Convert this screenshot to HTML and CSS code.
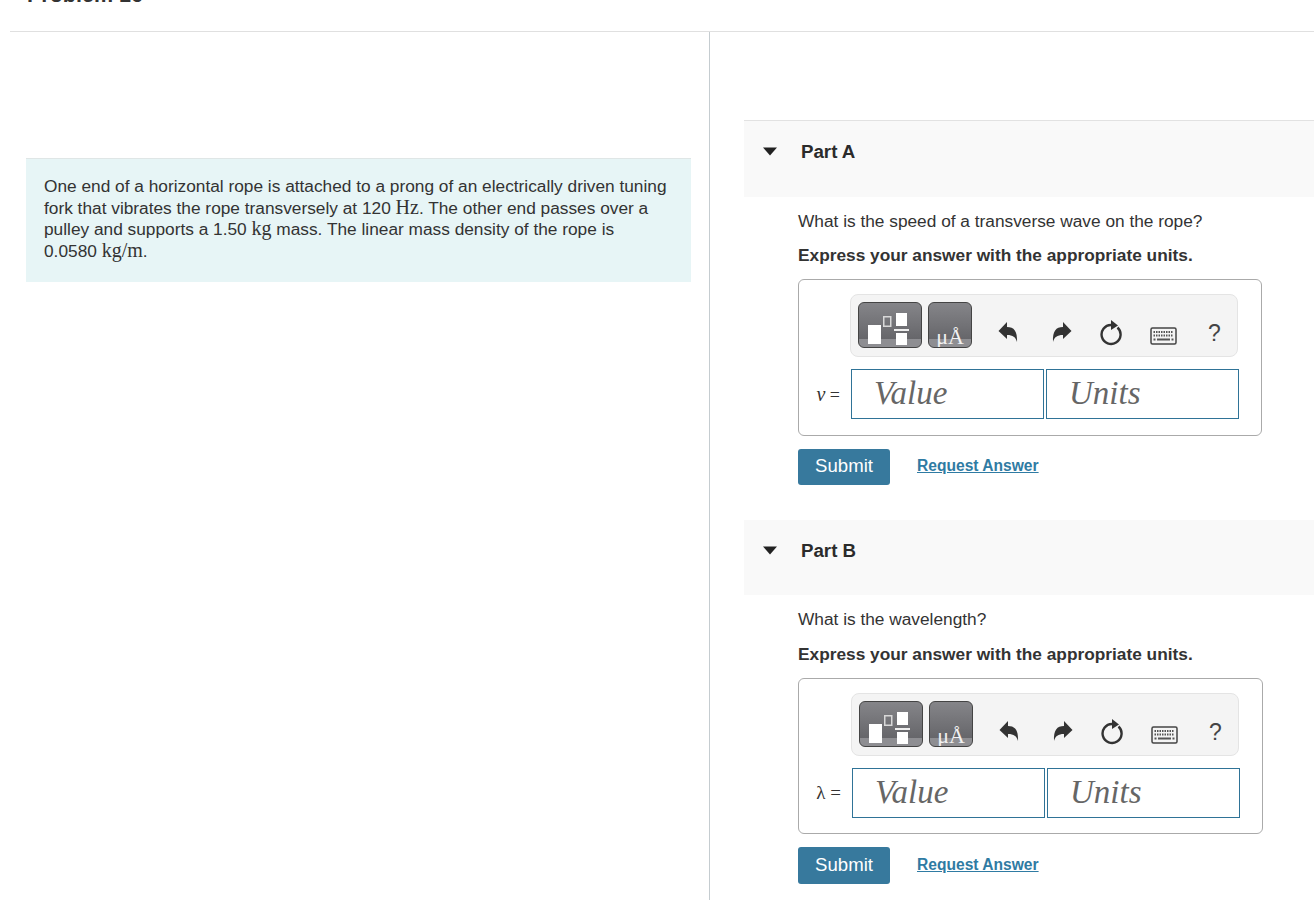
FILE: index.html
```html
<!DOCTYPE html>
<html lang="en">

<head>
    <meta charset="UTF-8">
    <title>Problem 16</title>
    <link rel="stylesheet" href="styles.css">
</head>

<body>
    <header class="top">
        <h1 class="title">Problem 16</h1>
    </header>

    <div class="columns">
        <div class="left">
            <div class="intro">
                <p>One end of a horizontal rope is attached to a prong of an electrically driven tuning
                    fork that vibrates the rope transversely at 120 <span class="math">Hz</span>. The other end passes over a
                    pulley and supports a 1.50 <span class="math">kg</span> mass. The linear mass density of the rope is
                    0.0580 <span class="math">kg/m</span>.</p>
            </div>
        </div>

        <div class="right">
            <!-- part A -->
            <section class="part">
                <div class="part-head part-head-first">
                    <svg class="caret" width="16" height="9" viewBox="0 0 16 9"><path d="M1 0.500H15L8 8.500Z" fill="#222" /></svg>
                    <h2>Part A</h2>
                </div>
                <div class="part-body">
                    <p class="question">What is the speed of a transverse wave on the rope?</p>
                    <p class="express">Express your answer with the appropriate units.</p>
                    <div class="answer">
                        <div class="toolbar">
                            <div class="tpl tpl-frac">
                                <svg width="64" height="46" viewBox="0 0 64 46">
                                    <rect x="10" y="23" width="13" height="19" fill="#fff" />
                                    <rect x="25.750" y="14.750" width="7" height="9.500" fill="none" stroke="#d8d8d8" stroke-width="1.500" />
                                    <rect x="38" y="11" width="11" height="13" fill="#fff" />
                                    <rect x="36" y="27" width="15" height="2" fill="#eee" />
                                    <rect x="38" y="31" width="11" height="12" fill="#fff" />
                                </svg>
                            </div>
                            <div class="tpl tpl-unit">μÅ</div>
                            <svg class="tool tool-undo" width="20" height="22" viewBox="0 0 20 22"><path d="M0.500 10L9 1V6C16 6 19.500 10 19 21C17.500 16 15 14 9 14V18Z" fill="#333" /></svg>
                            <svg class="tool tool-redo" width="20" height="22" viewBox="0 0 20 22"><path d="M19.500 10L11 1V6C4 6 0.500 10 1 21C2.500 16 5 14 11 14V18Z" fill="#333" /></svg>
                            <svg class="tool tool-reset" width="24" height="27" viewBox="0 0 24 27">
                                <path d="M17.500 8.500A9.500 9.500 0 1 1 11 6" fill="none" stroke="#333" stroke-width="2.400" />
                                <path d="M11 1L18 6.500L11 11Z" fill="#333" />
                            </svg>
                            <svg class="tool tool-keys" width="27" height="19" viewBox="0 0 27 19">
                                <rect x="1" y="2" width="25" height="16" rx="1.500" fill="#f4f4f4" stroke="#444" stroke-width="1.500" />
                                <path d="M3.500 6H23.500M3.500 9.500H23.500" stroke="#555" stroke-width="2" stroke-dasharray="1.500 1" />
                                <path d="M3.500 13.500H5.500M7 13.500H20M21.500 13.500H23.500" stroke="#555" stroke-width="1.800" />
                            </svg>
                            <span class="tool tool-help">?</span>
                        </div>
                        <div class="inputs">
                            <span class="var"><i>v</i> =</span>
                            <div class="field">Value</div>
                            <div class="field">Units</div>
                        </div>
                    </div>
                    <div class="actions">
                        <button class="submit">Submit</button>
                        <a class="request" href="#">Request Answer</a>
                    </div>
                </div>
            </section>

            <!-- part B -->
            <section class="part part-b">
                <div class="part-head">
                    <svg class="caret" width="16" height="9" viewBox="0 0 16 9"><path d="M1 0.500H15L8 8.500Z" fill="#222" /></svg>
                    <h2>Part B</h2>
                </div>
                <div class="part-body">
                    <p class="question">What is the wavelength?</p>
                    <p class="express">Express your answer with the appropriate units.</p>
                    <div class="answer">
                        <div class="toolbar">
                            <div class="tpl tpl-frac">
                                <svg width="64" height="46" viewBox="0 0 64 46">
                                    <rect x="10" y="23" width="13" height="19" fill="#fff" />
                                    <rect x="25.750" y="14.750" width="7" height="9.500" fill="none" stroke="#d8d8d8" stroke-width="1.500" />
                                    <rect x="38" y="11" width="11" height="13" fill="#fff" />
                                    <rect x="36" y="27" width="15" height="2" fill="#eee" />
                                    <rect x="38" y="31" width="11" height="12" fill="#fff" />
                                </svg>
                            </div>
                            <div class="tpl tpl-unit">μÅ</div>
                            <svg class="tool tool-undo" width="20" height="22" viewBox="0 0 20 22"><path d="M0.500 10L9 1V6C16 6 19.500 10 19 21C17.500 16 15 14 9 14V18Z" fill="#333" /></svg>
                            <svg class="tool tool-redo" width="20" height="22" viewBox="0 0 20 22"><path d="M19.500 10L11 1V6C4 6 0.500 10 1 21C2.500 16 5 14 11 14V18Z" fill="#333" /></svg>
                            <svg class="tool tool-reset" width="24" height="27" viewBox="0 0 24 27">
                                <path d="M17.500 8.500A9.500 9.500 0 1 1 11 6" fill="none" stroke="#333" stroke-width="2.400" />
                                <path d="M11 1L18 6.500L11 11Z" fill="#333" />
                            </svg>
                            <svg class="tool tool-keys" width="27" height="19" viewBox="0 0 27 19">
                                <rect x="1" y="2" width="25" height="16" rx="1.500" fill="#f4f4f4" stroke="#444" stroke-width="1.500" />
                                <path d="M3.500 6H23.500M3.500 9.500H23.500" stroke="#555" stroke-width="2" stroke-dasharray="1.500 1" />
                                <path d="M3.500 13.500H5.500M7 13.500H20M21.500 13.500H23.500" stroke="#555" stroke-width="1.800" />
                            </svg>
                            <span class="tool tool-help">?</span>
                        </div>
                        <div class="inputs">
                            <span class="var">λ =</span>
                            <div class="field">Value</div>
                            <div class="field">Units</div>
                        </div>
                    </div>
                    <div class="actions">
                        <button class="submit">Submit</button>
                        <a class="request" href="#">Request Answer</a>
                    </div>
                </div>
            </section>
        </div>
    </div>
</body>

</html>
```
FILE: styles.css
```css
html,
body {
    margin: 0;
    height: 900px;
    overflow: hidden;
    background: #fff;
}

body {
    font-family: "Liberation Sans", Arial, sans-serif;
    font-size: 17.300px;
    color: #333;
}

p,
h1,
h2 {
    margin: 0;
}

.top {
    height: 31px;
    margin-left: 10px;
    border-bottom: 1px solid #e0e0e0;
    overflow: hidden;
}

.title {
    margin-top: -17px;
    padding-left: 17px;
    font-size: 21.500px;
    line-height: 24px;
    font-weight: bold;
}

.columns {
    display: flex;
    height: 868px;
}

.left {
    box-sizing: border-box;
    width: 710px;
    padding: 126px 18px 0 26px;
    border-right: 1px solid #c5ccd0;
}

.intro {
    box-sizing: border-box;
    height: 124px;
    padding: 17px 22px 0 18px;
    background: #e7f5f6;
    border-top: 1px solid #dfe6e6;
    line-height: 21.500px;
}

.math {
    font-family: "Liberation Serif", "Times New Roman", serif;
    font-size: 20px;
    line-height: 0;
}

.right {
    flex: 1;
    padding: 88px 0 0 34px;
}

.part-head {
    box-sizing: border-box;
    display: flex;
    align-items: flex-start;
    height: 75px;
    padding: 21px 0 0 18px;
    background: #f9f9f9;
}

.part-head-first {
    height: 77px;
    border-top: 1px solid #e2e2e2;
}

.part-head h2 {
    margin-left: 23px;
    font-size: 18.700px;
    line-height: 20px;
    font-weight: bold;
    color: #2b2b2b;
}

.caret {
    margin-top: 5px;
}

.part-body {
    padding: 14px 0 0 54px;
}

.question {
    line-height: 20px;
}

.express {
    margin-top: 14px;
    font-weight: bold;
    line-height: 20px;
}

.answer {
    box-sizing: border-box;
    width: 464px;
    height: 157px;
    margin-top: 14px;
    padding-top: 14px;
    border: 1px solid #aaa;
    border-radius: 6px;
}

.toolbar {
    box-sizing: border-box;
    display: flex;
    align-items: flex-start;
    width: 388px;
    height: 63px;
    margin-left: 51px;
    padding: 7px 0 0 7px;
    background: #f4f4f4;
    border: 1px solid #e4e4e4;
    border-radius: 8px;
}

.tpl {
    box-sizing: border-box;
    height: 46px;
    border: 1px solid #444;
    border-radius: 6px;
    background: linear-gradient(#858589 0, #66666a 82%, #8e8e92 82%, #8e8e92 100%);
    overflow: hidden;
}

.tpl-frac {
    width: 64px;
}

.tpl-frac svg {
    display: block;
    margin: -1px;
}

.tpl-unit {
    width: 44px;
    margin-left: 6px;
    padding-top: 23px;
    font-family: "Liberation Serif", "Times New Roman", serif;
    font-size: 22px;
    line-height: 22px;
    text-align: center;
    color: #f2f2f2;
    white-space: nowrap;
}

.tool {
    flex: none;
    display: block;
}

.tool-undo {
    margin: 19px 0 0 26px;
}

.tool-redo {
    margin: 19px 0 0 34px;
}

.tool-reset {
    margin: 17px 0 0 28px;
}

.tool-keys {
    margin: 24px 0 0 26px;
}

.tool-help {
    margin: 19px 0 0 31px;
    font-size: 23px;
    line-height: 24px;
    color: #444;
}

.inputs {
    display: flex;
    align-items: center;
    margin-top: 12px;
}

.var {
    box-sizing: border-box;
    width: 52px;
    padding-right: 11px;
    text-align: right;
    font-family: "Liberation Serif", "Times New Roman", serif;
    font-size: 18px;
    white-space: nowrap;
}

.var i {
    font-size: 20px;
}

.field {
    box-sizing: border-box;
    width: 193px;
    height: 50px;
    margin-right: 2px;
    padding-left: 22px;
    border: 1px solid #2f7397;
    font-family: "Liberation Serif", "Times New Roman", serif;
    font-style: italic;
    font-size: 33px;
    line-height: 47px;
    color: #666;
}

.actions {
    display: flex;
    align-items: center;
    margin-top: 13px;
}

.submit {
    box-sizing: border-box;
    width: 92px;
    height: 36px;
    padding: 0 0 2px;
    border: 0;
    border-radius: 3px;
    background: #37799d;
    font-family: "Liberation Sans", Arial, sans-serif;
    font-size: 18.600px;
    color: #fff;
}

.request {
    margin: 0 0 2px 27px;
    font-size: 15.600px;
    font-weight: bold;
    color: #2f7ba3;
}

.part-b {
    margin-top: 35px;
}

.part-b .part-head {
    height: 75px;
}

.part-b .express {
    margin-top: 15px;
}

.part-b .answer {
    width: 465px;
    height: 156px;
}

.part-b .toolbar {
    margin-left: 52px;
}

.part-b .var {
    width: 53px;
    font-size: 19px;
}

.part-b .submit {
    height: 37px;
}
```
